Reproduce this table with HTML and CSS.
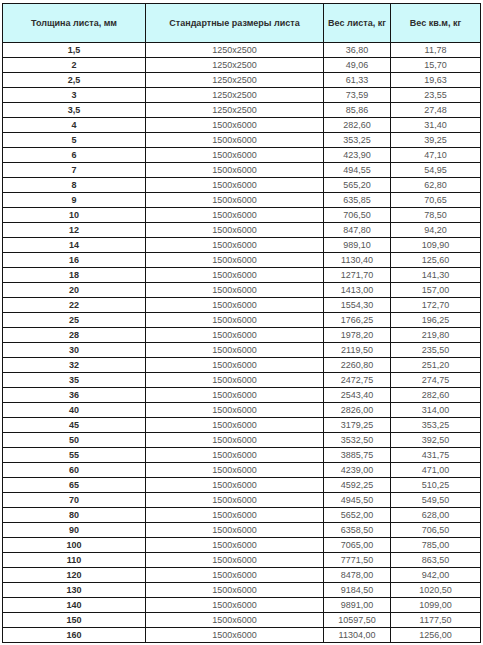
FILE: index.html
```html
<!DOCTYPE html>
<html lang="ru">
<head>
<meta charset="utf-8">
<title>Толщина листа</title>
<link rel="stylesheet" href="styles.css">
</head>
<body>
<table class="sheet">
  <colgroup>
    <col class="c1"><col class="c2"><col class="c3"><col class="c4">
  </colgroup>
  <thead>
    <tr><th>Толщина листа, мм</th><th>Стандартные размеры листа</th><th>Вес листа, кг</th><th>Вес кв.м, кг</th></tr>
  </thead>
  <tbody>
    <tr><td class="t">1,5</td><td>1250x2500</td><td>36,80</td><td>11,78</td></tr>
    <tr><td class="t">2</td><td>1250x2500</td><td>49,06</td><td>15,70</td></tr>
    <tr><td class="t">2,5</td><td>1250x2500</td><td>61,33</td><td>19,63</td></tr>
    <tr><td class="t">3</td><td>1250x2500</td><td>73,59</td><td>23,55</td></tr>
    <tr><td class="t">3,5</td><td>1250x2500</td><td>85,86</td><td>27,48</td></tr>
    <tr><td class="t">4</td><td>1500x6000</td><td>282,60</td><td>31,40</td></tr>
    <tr><td class="t">5</td><td>1500x6000</td><td>353,25</td><td>39,25</td></tr>
    <tr><td class="t">6</td><td>1500x6000</td><td>423,90</td><td>47,10</td></tr>
    <tr><td class="t">7</td><td>1500x6000</td><td>494,55</td><td>54,95</td></tr>
    <tr><td class="t">8</td><td>1500x6000</td><td>565,20</td><td>62,80</td></tr>
    <tr><td class="t">9</td><td>1500x6000</td><td>635,85</td><td>70,65</td></tr>
    <tr><td class="t">10</td><td>1500x6000</td><td>706,50</td><td>78,50</td></tr>
    <tr><td class="t">12</td><td>1500x6000</td><td>847,80</td><td>94,20</td></tr>
    <tr><td class="t">14</td><td>1500x6000</td><td>989,10</td><td>109,90</td></tr>
    <tr><td class="t">16</td><td>1500x6000</td><td>1130,40</td><td>125,60</td></tr>
    <tr><td class="t">18</td><td>1500x6000</td><td>1271,70</td><td>141,30</td></tr>
    <tr><td class="t">20</td><td>1500x6000</td><td>1413,00</td><td>157,00</td></tr>
    <tr><td class="t">22</td><td>1500x6000</td><td>1554,30</td><td>172,70</td></tr>
    <tr><td class="t">25</td><td>1500x6000</td><td>1766,25</td><td>196,25</td></tr>
    <tr><td class="t">28</td><td>1500x6000</td><td>1978,20</td><td>219,80</td></tr>
    <tr><td class="t">30</td><td>1500x6000</td><td>2119,50</td><td>235,50</td></tr>
    <tr><td class="t">32</td><td>1500x6000</td><td>2260,80</td><td>251,20</td></tr>
    <tr><td class="t">35</td><td>1500x6000</td><td>2472,75</td><td>274,75</td></tr>
    <tr><td class="t">36</td><td>1500x6000</td><td>2543,40</td><td>282,60</td></tr>
    <tr><td class="t">40</td><td>1500x6000</td><td>2826,00</td><td>314,00</td></tr>
    <tr><td class="t">45</td><td>1500x6000</td><td>3179,25</td><td>353,25</td></tr>
    <tr><td class="t">50</td><td>1500x6000</td><td>3532,50</td><td>392,50</td></tr>
    <tr><td class="t">55</td><td>1500x6000</td><td>3885,75</td><td>431,75</td></tr>
    <tr><td class="t">60</td><td>1500x6000</td><td>4239,00</td><td>471,00</td></tr>
    <tr><td class="t">65</td><td>1500x6000</td><td>4592,25</td><td>510,25</td></tr>
    <tr><td class="t">70</td><td>1500x6000</td><td>4945,50</td><td>549,50</td></tr>
    <tr><td class="t">80</td><td>1500x6000</td><td>5652,00</td><td>628,00</td></tr>
    <tr><td class="t">90</td><td>1500x6000</td><td>6358,50</td><td>706,50</td></tr>
    <tr><td class="t">100</td><td>1500x6000</td><td>7065,00</td><td>785,00</td></tr>
    <tr><td class="t">110</td><td>1500x6000</td><td>7771,50</td><td>863,50</td></tr>
    <tr><td class="t">120</td><td>1500x6000</td><td>8478,00</td><td>942,00</td></tr>
    <tr><td class="t">130</td><td>1500x6000</td><td>9184,50</td><td>1020,50</td></tr>
    <tr><td class="t">140</td><td>1500x6000</td><td>9891,00</td><td>1099,00</td></tr>
    <tr><td class="t">150</td><td>1500x6000</td><td>10597,50</td><td>1177,50</td></tr>
    <tr><td class="t">160</td><td>1500x6000</td><td>11304,00</td><td>1256,00</td></tr>
  </tbody>
</table>
</body>
</html>
```
FILE: styles.css
```css
html, body {
  margin: 0;
  padding: 0;
  background: #ffffff;
}
body {
  font-family: "Liberation Sans", Arial, sans-serif;
}
.sheet {
  margin: 3px 0 0 2px;
  width: 478px;
  table-layout: fixed;
  border-collapse: collapse;
  border: 1px solid #141414;
}
.c1 { width: 143px; }
.c2 { width: 178px; }
.c3 { width: 67px; }
.c4 { width: 90px; }
.sheet th,
.sheet td {
  border: 1px solid #141414;
  padding: 0;
  text-align: center;
  vertical-align: middle;
}
.sheet th {
  height: 38px;
  background: #cef9fa;
  color: #2e2e2e;
  font-size: 9px;
  font-weight: bold;
  line-height: 12px;
}
.sheet td {
  height: 14px;
  line-height: 14px;
  font-size: 9px;
  color: #555555;
}
.sheet td.t {
  font-weight: bold;
  color: #2e2e2e;
}
```
